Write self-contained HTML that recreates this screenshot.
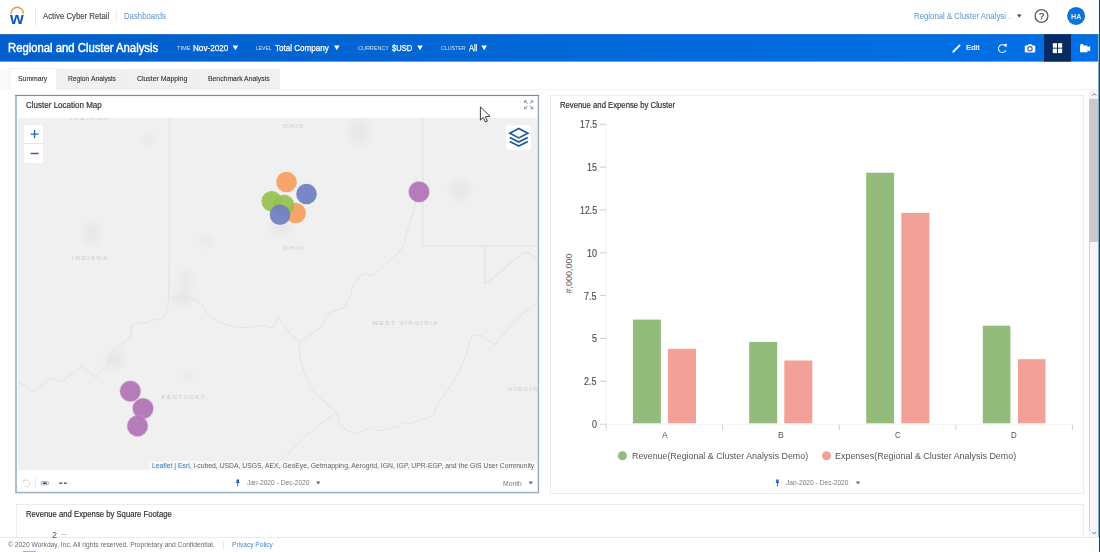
<!DOCTYPE html>
<html lang="en"><head><meta charset="utf-8"><title>Regional and Cluster Analysis</title>
<style>
html,body{margin:0;padding:0;background:#fff;}
body{width:1100px;height:552px;overflow:hidden;font-family:"Liberation Sans",sans-serif;}
#root{position:relative;width:1100px;height:552px;overflow:hidden;background:#fff;font-family:"Liberation Sans",sans-serif;}
#root div,#root span,#root svg{position:absolute;box-sizing:border-box;}
.t{white-space:nowrap;display:block;}
.tab{background:#f0f0f0;border:1px solid #eeeeee;top:68.6px;height:20.6px;}
.card{background:#fff;border:1px solid #ececec;}
.ml{color:#cacaca;font-size:6.2px;line-height:7px;white-space:nowrap;}

</style></head>
<body>
<div id="root">
<!-- ===== top header ===== -->
<svg style="left:0;top:0" width="60" height="34" viewBox="0 0 60 34">
  <path d="M11.15 13.3 A6.05 6.05 0 0 1 23.25 13.3" fill="none" stroke="#e6a044" stroke-width="1.45" stroke-linecap="round"/>
  <rect x="35" y="7" width="1" height="18.5" fill="#e8e8e8"/>
</svg>
<span class="t" style="left:10.1px;top:11.1px;font-size:17px;line-height:18px;font-weight:700;color:#0a58b8;transform:scale(1.04,0.94);transform-origin:0 0;">w</span>
<div style="left:116px;top:11px;width:1px;height:11px;background:#ececec"></div>
<svg style="left:1010px;top:0" width="90" height="34" viewBox="1010 0 90 34">
  <path d="M1017 14.5 h4.6 l-2.3 3 z" fill="#2c416b"/>
  <circle cx="1041.5" cy="16" r="6.4" fill="#fff" stroke="#5c5c5c" stroke-width="1.35"/>
  <circle cx="1076.1" cy="15.9" r="9" fill="#0b72de"/>
</svg>
<span class="t" style="left:1038.95px;top:11.3px;font-size:9.4px;line-height:10px;font-weight:400;color:#484848;-webkit-text-stroke:0.25px #484848;">?</span>

<!-- ===== blue title bar ===== -->
<svg style="left:0;top:33px" width="1100" height="30" viewBox="0 33 1100 30"><defs><linearGradient id="bg" x1="0" y1="0" x2="1" y2="0"><stop offset="0" stop-color="#005fca"/><stop offset="1" stop-color="#0070e6"/></linearGradient></defs><rect x="0" y="34.3" width="1098.6" height="27.3" fill="url(#bg)"/><rect x="0" y="34.3" width="1098.6" height="0.8" fill="#0a58b4" fill-opacity="0.7"/><rect x="1044" y="34.3" width="27" height="27.3" fill="#062a62"/></svg>
<svg style="left:0;top:34px" width="1100" height="28" viewBox="0 34 1100 28">
  <g fill="#fff">
    <path d="M232.6 45.6 h5.6 l-2.8 4.6 z"/>
    <path d="M334 45.6 h5.6 l-2.8 4.6 z"/>
    <path d="M417.2 45.6 h5.6 l-2.8 4.6 z"/>
    <path d="M481.4 45.6 h5.6 l-2.8 4.6 z"/>
    <!-- pencil -->
    <path d="M952.2 52.8 l0.6 -2 l6.6 -6.6 l1.4 1.4 l-6.6 6.6 z"/>
    <!-- camera -->
    <path d="M1025.6 45.5 h2 l0.9 -1.3 h3 l0.9 1.3 h2 a0.8 0.8 0 0 1 0.8 0.8 v5.4 a0.8 0.8 0 0 1 -0.8 0.8 h-8.8 a0.8 0.8 0 0 1 -0.8 -0.8 v-5.4 a0.8 0.8 0 0 1 0.8 -0.8 z"/>
    <!-- grid -->
    <rect x="1052.8" y="43.2" width="4.2" height="4.5"/><rect x="1058" y="43.2" width="4.2" height="4.5"/>
    <rect x="1052.8" y="48.6" width="4.2" height="4.5"/><rect x="1058" y="48.6" width="4.2" height="4.5"/>
    <!-- video camera -->
    <path d="M1080 45.4 h0.5 v-1.3 h2.7 v1.3 h4.3 v1.9 l2.7 -1.3 v5.6 l-2.7 -1.3 v2 h-7.5 z"/>
  </g>
  <circle cx="1030" cy="48.7" r="2.7" fill="#3d62a8"/>
  <circle cx="1030" cy="48.7" r="1.5" fill="#fff"/>
  <!-- refresh -->
  <path d="M1005.4 46.2 A3.9 3.9 0 1 0 1005.9 50.2" fill="none" stroke="#eaf4ff" stroke-width="1.05"/>
  <path d="M1003.4 44.2 l3.6 -0.4 l-0.6 3.6 z" fill="#eaf4ff"/>
</svg>

<!-- ===== tabs ===== -->
<div style="left:0;top:89px;width:1089px;height:1px;background:#f3f2f1"></div>
<div style="left:0;top:68.6px;width:8.5px;height:21px;background:#fafafa"></div>
<div class="tab" style="left:57px;width:69px;"></div>
<div class="tab" style="left:126px;width:72.5px;"></div>
<div class="tab" style="left:198.5px;width:81.5px;"></div>
<div style="left:8.5px;top:68.3px;width:48.5px;height:22px;background:#fff;border:1px solid #f1f1f1;border-bottom:none"></div>

<!-- ===== card 1 : map ===== -->
<svg style="left:14px;top:93px" width="527" height="402" viewBox="14 93 527 402">
  <rect x="16" y="95.45" width="522.4" height="397.1" rx="1.5" fill="#fff" stroke="none"/>
  <rect x="15.1" y="95" width="1.8" height="398" fill="#a7b8c8"/>
  <rect x="537.7" y="95" width="1.4" height="398" fill="#93a8bb"/>
  <rect x="15.1" y="491.8" width="524" height="1.6" fill="#a3b4c4"/>
  <rect x="15.1" y="94.85" width="524" height="1.2" fill="#7f8d94"/>
</svg>
<div id="map" style="left:18px;top:118px;width:519px;height:352px;background:#f0f0f0;overflow:hidden;">
  <svg style="left:0;top:0" width="520" height="352" viewBox="18 118 520 352">
    <defs><filter id="bl" x="-50%" y="-50%" width="200%" height="200%"><feGaussianBlur stdDeviation="3.5"/></filter></defs>
    <g fill="#e8e8e8" stroke="none" filter="url(#bl)">
      <ellipse cx="91.5" cy="234" rx="8" ry="12"/><ellipse cx="149" cy="139" rx="6" ry="5"/>
      <ellipse cx="206" cy="241" rx="6" ry="6"/><ellipse cx="186" cy="279" rx="7" ry="10"/>
      <ellipse cx="281" cy="228" rx="11" ry="8"/><ellipse cx="359" cy="132" rx="11" ry="13"/>
      <ellipse cx="460" cy="190" rx="11" ry="11"/><ellipse cx="182" cy="298" rx="10" ry="8"/>
      <ellipse cx="115" cy="360" rx="10" ry="9"/><ellipse cx="188" cy="376" rx="5" ry="5"/>
    </g>
    <g fill="none" stroke="#dadcde" stroke-width="0.8">
      <path d="M169 118 V291"/>
      <path d="M423 118 V245.8 H538"/>
      <path d="M484.7 246 V284 L491 279.5 L498 274 L509 264 L520.4 255 L525 252.5 L530 253.6 L534 257 L538 260"/>
    </g>
    <g fill="none" stroke="#e1e1e1" stroke-width="0.9" stroke-linejoin="round">
      <path d="M168.8 291 L168 303.6 L166 312 L163 318 L154 320 L145.6 322.7 L138 323 L131.2 326 L131.5 333 L129.6 338.7 L125 341 L121.7 345 L116 348 L112 353 L109 361 L105.7 367.4 L100 372 L96 378.5 L91 373 L86.6 370.5 L83 367 L80.2 365.8 L76 371 L72.2 373.7 L66 378 L61 381.7 L55 379 L50 378.5 L45 383 L40.3 386.5 L36 390 L32.4 391.3 L28 387 L24.4 385 L18 383"/>
      <path d="M168.8 299 L171 298.8 L177 296 L184 295.6 L193 299 L201.4 303.6 L205 310 L209.4 316.3 L217 321 L225.3 324.3 L236 327 L247.7 327.5 L257 326 L266.8 326 L273 328 L278 318 L283 324 L287.6 330.7 L294 337 L300.3 341.8"/>
      <path d="M416 177 L417.5 184 L416 200 L413.6 210.5 L411 219 L408.8 226.5 L406 236 L404 245.6 L400 251 L396 255 L389 261 L383.3 266.3 L377 272 L370.5 276 L366 273.5 L362.5 274.3 L358 279 L354.6 282.3 L352 288 L351.4 294 L348 300 L345 306.8 L337 310 L329 313 L325 320 L322.7 326 L311 334 L300.3 341.8 L299 350 L300.3 357.8 L304 372 L310 386.5 L317 395 L325.8 402.5 L331 408 L337 412.7 L339 420 L341.8 426.4 L348 431 L356 434.3 L364 430 L372 426.4 L376 430 L380 431 L390 428 L399 426.4 L404 421.6 L408 423.5 L412 423 L423 419.5 L434.3 415 L435 409 L437.5 404 L447 391 L456.6 377 L462 365 L466.2 354.6 L469 344 L472.6 334 L477 336 L482 335.5 L489 341 L495 345 L501 337 L507.7 329 L515 321 L523.6 313 L531 308 L538 302"/>
      <path d="M337 412.7 L325.8 420 L314 429 L303.5 437.5 L295 446 L287.6 453.5 L282 459 L278 463 L272 470"/>
      <path d="M27.6 194.6 L45 180 L69 167.4 L96 159 L123 156 L142 161 L158 172" stroke="#f4f4f4" stroke-width="1"/>
    </g>
  </svg>
  <!-- map labels -->
  <span class="ml" style="left:52.4px;top:-4.0px;letter-spacing:2.0px;">INDIANA</span>
  <span class="ml" style="left:264.8px;top:3.8px;letter-spacing:1.6px;">OHIO</span>
  <span class="ml" style="left:264.8px;top:125.8px;letter-spacing:1.6px;">OHIO</span>
  <span class="ml" style="left:54.1px;top:136.3px;letter-spacing:1.6px;">INDIANA</span>
  <span class="ml" style="left:143.4px;top:274.6px;letter-spacing:1.4px;">KENTUCKY</span>
  <span class="ml" style="left:354.2px;top:201.2px;letter-spacing:1.55px;">WEST VIRGINIA</span>
  <span class="ml" style="left:490.3px;top:266.9px;letter-spacing:1.55px;">VIRGINIA</span>
  <!-- markers -->
  <svg style="left:0;top:0" width="520" height="352" viewBox="18 118 520 352">
    <g fill-opacity="0.92">
      <circle cx="286.5" cy="182" r="10.3" fill="#f5a05c"/>
      <circle cx="306.5" cy="194" r="10.3" fill="#6e7fc2"/>
      <circle cx="295.6" cy="213" r="10.3" fill="#f5a05c"/>
      <circle cx="271.7" cy="201.3" r="10.3" fill="#97c04f"/>
      <circle cx="284" cy="205" r="10.3" fill="#97c04f"/>
      <circle cx="280" cy="214.8" r="10.3" fill="#6e7fc2"/>
      <circle cx="419" cy="191.8" r="10.4" fill="#b072b5" stroke="#d9a8dc" stroke-opacity="0.35" stroke-width="1.2"/>
      <circle cx="130.3" cy="391.2" r="10.4" fill="#b072b5" stroke="#d9a8dc" stroke-opacity="0.35" stroke-width="1.2"/>
      <circle cx="143" cy="408.6" r="10.4" fill="#b072b5" stroke="#d9a8dc" stroke-opacity="0.35" stroke-width="1.2"/>
      <circle cx="137.5" cy="426" r="10.4" fill="#b072b5" stroke="#d9a8dc" stroke-opacity="0.35" stroke-width="1.2"/>
    </g>
  </svg>
  <!-- zoom control -->
  <div style="left:5.9px;top:6.6px;width:19.3px;height:38.4px;background:#fff;border-radius:1.5px;"></div>
  <div style="left:5.9px;top:25.2px;width:19.3px;height:1px;background:#e4e4e4;"></div>
  <svg style="left:6px;top:7px" width="20" height="38" viewBox="24 125 20 38">
    <path d="M30.5 134.1 h8.2 M34.6 130 v8.2 M30.6 153.5 h8" stroke="#2d66a8" stroke-width="1.35" fill="none"/>
  </svg>
  <!-- layers control -->
  <div style="left:487.8px;top:6.5px;width:25.2px;height:25.4px;background:#fff;border-radius:3px;"></div>
  <svg style="left:487.6px;top:6.4px" width="25.4" height="25.4" viewBox="505.6 124.4 25.4 25.4">
    <g fill="none" stroke="#1f5b96" stroke-width="1.9" stroke-linejoin="miter">
      <path d="M509.4 141.9 L518.4 146.4 L527.4 141.9"/>
      <path d="M509.4 137.9 L518.4 142.4 L527.4 137.9"/>
      <path d="M518.4 128.9 L527.4 133.6 L518.4 138.3 L509.4 133.6 Z" fill="#fff" stroke-width="1.7"/>
    </g>
  </svg>
  <!-- attribution -->
  <div style="left:131px;top:343px;width:389px;height:9.2px;background:rgba(250,252,255,0.62);"></div>
</div>
<!-- fullscreen icon -->
<svg style="left:524px;top:100px" width="10" height="10" viewBox="524 100 10 10">
  <g stroke="#7d8a96" stroke-width="0.9" fill="none">
    <path d="M524.6 103 V100.8 H526.8 M530.6 100.8 H532.8 V103 M532.8 106.6 V108.8 H530.6 M526.8 108.8 H524.6 V106.6"/>
    <path d="M524.8 101 L527.6 103.8 M532.6 101 L529.8 103.8 M532.6 108.6 L529.8 105.8 M524.8 108.6 L527.6 105.8"/>
  </g>
</svg>
<!-- mouse cursor -->
<svg style="left:478px;top:104px" width="16" height="20" viewBox="478 104 16 20">
  <path d="M480.4 106.9 V120 L483.3 117.5 L485.3 122 L487.4 121.1 L485.4 116.7 L490 116.3 Z" fill="#fff" stroke="#2a2a2a" stroke-width="0.9" stroke-linejoin="round"/>
</svg>
<!-- card1 footer icons -->
<svg style="left:18px;top:474px" width="520" height="18" viewBox="18 474 520 18">
  <path d="M23.4 481.6 A3.4 3.4 0 1 1 24.6 486.2" fill="none" stroke="#d6d6d6" stroke-width="0.9"/>
  <path d="M22.2 480 l1.2 2.4 l2 -1.6 z" fill="#d6d6d6"/>
  <rect x="35" y="477.8" width="0.8" height="10.4" fill="#e6e6e6"/>
  <rect x="41" y="481.5" width="7.6" height="3.4" rx="1.7" fill="none" stroke="#7da7d6" stroke-width="0.8"/>
  <rect x="42.8" y="482.5" width="4" height="1.5" fill="#3c3c3c"/>
  <rect x="59.2" y="482.4" width="3" height="1.6" fill="#6a6a6a"/>
  <rect x="63.8" y="482.4" width="3" height="1.6" fill="#6a6a6a"/>
  <!-- pin -->
  <path d="M236.6 479.4 h2.4 v2.6 l0.9 1.1 h-1.7 v2.8 l-0.4 0.8 l-0.4 -0.8 v-2.8 h-1.7 l0.9 -1.1 z" fill="#2456c6"/>
  <path d="M316 481.6 h4.4 l-2.2 2.8 z" fill="#6b6b6b"/>
  <path d="M528.6 481.6 h4.4 l-2.2 2.8 z" fill="#6b6b6b"/>
</svg>

<!-- ===== card 2 : bar chart ===== -->
<div class="card" style="left:550px;top:95px;width:534px;height:398.8px;"></div>
<svg style="left:551px;top:96px" width="532" height="396" viewBox="551 96 532 396">
  <g stroke="#c6c6c6" stroke-width="0.9" fill="none">
    <path d="M600 124.3 H606.4 M600 167.1 H606.4 M600 209.9 H606.4 M600 252.8 H606.4 M600 295.6 H606.4 M600 338.4 H606.4 M600 381.3 H606.4 M600 424.2 H606.4"/>
    <path d="M606.2 424.5 V430 M722.6 424.5 V430 M839.2 424.5 V430 M955.8 424.5 V430 M1072.4 424.5 V430"/>
  </g>
  <path d="M606.2 124 V424.3 H1072.4" stroke="#f0f0f0" stroke-width="0.8" fill="none"/>
  <g fill="#93bc7c">
    <rect x="632.9" y="319.6" width="28" height="103.7"/>
    <rect x="749.2" y="342" width="28" height="81.3"/>
    <rect x="866.2" y="172.7" width="27.9" height="250.6"/>
    <rect x="982.8" y="325.7" width="27.6" height="97.6"/>
    <circle cx="622.4" cy="455.8" r="4.5"/>
  </g>
  <g fill="#f3a198">
    <rect x="668" y="348.8" width="28" height="74.5"/>
    <rect x="784.3" y="360.5" width="28" height="62.8"/>
    <rect x="901.4" y="212.9" width="28" height="210.4"/>
    <rect x="1017.9" y="359.2" width="27.6" height="64.1"/>
    <circle cx="826.5" cy="455.8" r="4.5"/>
  </g>
  <path d="M776.2 479.4 h2.4 v2.6 l0.9 1.1 h-1.7 v2.8 l-0.4 0.8 l-0.4 -0.8 v-2.8 h-1.7 l0.9 -1.1 z" fill="#2456c6"/>
  <path d="M855.8 481.6 h4.4 l-2.2 2.8 z" fill="#6b6b6b"/>
</svg>
<span class="t" style="left:544.1px;top:269px;width:50px;text-align:center;font-size:9.1px;line-height:9px;color:#666;transform:rotate(-90deg) scaleX(0.985);transform-origin:50% 50%;">#,000,000</span>

<!-- ===== card 3 (cut off) ===== -->
<div class="card" style="left:15.5px;top:504px;width:1068.5px;height:60px;"></div>
<div style="left:60.5px;top:533.6px;width:6.3px;height:0.9px;background:#cfcfcf"></div>

<!-- ===== right scrollbar ===== -->
<div style="left:1089px;top:89px;width:9.6px;height:448px;background:#f6f6f6;"></div>
<div style="left:1089px;top:99px;width:9.4px;height:143px;background:#c9c9c9;"></div>
<div style="left:1089px;top:242px;width:0.9px;height:290px;background:#cfd3d6;"></div>
<svg style="left:1089px;top:89px" width="10" height="449" viewBox="1089 89 10 449">
  <path d="M1092.4 95.6 l1.9 -2 l1.9 2 M1092.4 532 l1.9 2 l1.9 -2" fill="none" stroke="#747474" stroke-width="1"/>
</svg>
<div style="left:1097.8px;top:34px;width:0.8px;height:518px;background:#7fb0cc;"></div>
<div style="left:1098.5px;top:0;width:1.5px;height:552px;background:#124a5c;"></div>

<!-- ===== footer ===== -->
<div style="left:0;top:536.8px;width:1098.6px;height:15.2px;background:#fff;border-top:1px solid #e9e9e9;"></div>
<div style="left:223px;top:540.5px;width:0.8px;height:8px;background:#e4e4e4"></div>
<div style="left:23.4px;top:550.8px;width:12.2px;height:1.2px;background:#b4b0c2"></div>

<!-- text labels -->
<span class="t" id="t0" style="left:43.00px;top:12.15px;font-size:8.40px;line-height:8.40px;font-weight:400;color:#4a4a4a;transform:scaleX(0.9309);transform-origin:0 50%;-webkit-text-stroke:0.15px #4a4a4a;">Active Cyber Retail</span>
<span class="t" id="t1" style="left:124.00px;top:12.15px;font-size:8.40px;line-height:8.40px;font-weight:400;color:#5a93cf;transform:scaleX(0.9298);transform-origin:0 50%;">Dashboards</span>
<span class="t" id="t2" style="left:914.20px;top:12.25px;font-size:8.40px;line-height:8.40px;font-weight:400;color:#5a93cf;transform:scaleX(0.9321);transform-origin:0 50%;">Regional &amp; Cluster Analysi</span>
<span class="t" id="t3" style="left:1007.60px;top:12.25px;font-size:8.40px;line-height:8.40px;font-weight:400;color:#c2cad3;transform:scaleX(0.7302);transform-origin:0 50%;">..</span>
<span class="t" id="t4" style="left:1070.90px;top:12.73px;font-size:7.00px;line-height:7.00px;font-weight:700;color:#eaf3fd;transform:scaleX(1.0173);transform-origin:0 50%;">HA</span>
<span class="t" id="t5" style="left:8.30px;top:42.07px;font-size:12.10px;line-height:12.10px;font-weight:400;color:#fff;transform:scaleX(0.9342);transform-origin:0 50%;-webkit-text-stroke:0.45px #fff;">Regional and Cluster Analysis</span>
<span class="t" id="t6" style="left:177.00px;top:45.80px;font-size:5.80px;line-height:5.80px;font-weight:400;color:#cfe2f8;transform:scaleX(0.9741);transform-origin:0 50%;">TIME</span>
<span class="t" id="t7" style="left:193.40px;top:44.25px;font-size:8.60px;line-height:8.60px;font-weight:400;color:#fff;transform:scaleX(0.9446);transform-origin:0 50%;-webkit-text-stroke:0.25px #fff;">Nov-2020</span>
<span class="t" id="t8" style="left:256.40px;top:45.80px;font-size:5.80px;line-height:5.80px;font-weight:400;color:#cfe2f8;transform:scaleX(0.8637);transform-origin:0 50%;">LEVEL</span>
<span class="t" id="t9" style="left:275.30px;top:44.25px;font-size:8.60px;line-height:8.60px;font-weight:400;color:#fff;transform:scaleX(0.9367);transform-origin:0 50%;-webkit-text-stroke:0.25px #fff;">Total Company</span>
<span class="t" id="t10" style="left:358.00px;top:45.80px;font-size:5.80px;line-height:5.80px;font-weight:400;color:#cfe2f8;transform:scaleX(0.9434);transform-origin:0 50%;">CURRENCY</span>
<span class="t" id="t11" style="left:391.80px;top:44.25px;font-size:8.60px;line-height:8.60px;font-weight:400;color:#fff;transform:scaleX(0.8807);transform-origin:0 50%;-webkit-text-stroke:0.25px #fff;">$USD</span>
<span class="t" id="t12" style="left:441.30px;top:45.80px;font-size:5.80px;line-height:5.80px;font-weight:400;color:#cfe2f8;transform:scaleX(0.9127);transform-origin:0 50%;">CLUSTER</span>
<span class="t" id="t13" style="left:468.50px;top:44.25px;font-size:8.60px;line-height:8.60px;font-weight:400;color:#fff;transform:scaleX(0.8680);transform-origin:0 50%;-webkit-text-stroke:0.25px #fff;">All</span>
<span class="t" id="t14" style="left:966.00px;top:44.25px;font-size:8.10px;line-height:8.10px;font-weight:400;color:#f4faff;transform:scaleX(0.9747);transform-origin:0 50%;-webkit-text-stroke:0.22px #f4faff;">Edit</span>
<span class="t" id="t15" style="left:17.70px;top:75.43px;font-size:7.40px;line-height:7.40px;font-weight:400;color:#333;transform:scaleX(0.9265);transform-origin:0 50%;-webkit-text-stroke:0.12px #333;">Summary</span>
<span class="t" id="t16" style="left:68.00px;top:75.43px;font-size:7.40px;line-height:7.40px;font-weight:400;color:#333;transform:scaleX(0.9127);transform-origin:0 50%;-webkit-text-stroke:0.12px #333;">Region Analysis</span>
<span class="t" id="t17" style="left:137.00px;top:75.43px;font-size:7.40px;line-height:7.40px;font-weight:400;color:#333;transform:scaleX(0.9345);transform-origin:0 50%;-webkit-text-stroke:0.12px #333;">Cluster Mapping</span>
<span class="t" id="t18" style="left:207.80px;top:75.43px;font-size:7.40px;line-height:7.40px;font-weight:400;color:#333;transform:scaleX(0.9257);transform-origin:0 50%;-webkit-text-stroke:0.12px #333;">Benchmark Analysis</span>
<span class="t" id="t19" style="left:26.00px;top:100.90px;font-size:8.30px;line-height:8.30px;font-weight:400;color:#2e2e2e;transform:scaleX(0.9668);transform-origin:0 50%;-webkit-text-stroke:0.18px #2e2e2e;">Cluster Location Map</span>
<span class="t" id="t20" style="left:560.00px;top:100.90px;font-size:8.30px;line-height:8.30px;font-weight:400;color:#2e2e2e;transform:scaleX(0.9304);transform-origin:0 50%;-webkit-text-stroke:0.18px #2e2e2e;">Revenue and Expense by Cluster</span>
<span class="t" id="t21" style="left:26.00px;top:510.30px;font-size:8.30px;line-height:8.30px;font-weight:400;color:#2e2e2e;transform:scaleX(0.9296);transform-origin:0 50%;-webkit-text-stroke:0.18px #2e2e2e;">Revenue and Expense by Square Footage</span>
<span class="t" id="t22" style="left:8.20px;top:541.13px;font-size:7.00px;line-height:7.00px;font-weight:400;color:#6a6a6a;transform:scaleX(0.9527);transform-origin:0 50%;">© 2020 Workday, Inc. All rights reserved. Proprietary and Confidential.</span>
<span class="t" id="t23" style="left:231.80px;top:541.13px;font-size:7.00px;line-height:7.00px;font-weight:400;color:#4a86c8;transform:scaleX(0.9385);transform-origin:0 50%;">Privacy Policy</span>
<span class="t" id="t24" style="left:579.50px;top:120.23px;font-size:10.10px;line-height:10.10px;font-weight:400;color:#4f4f4f;transform:scaleX(0.8700);transform-origin:0 50%;-webkit-text-stroke:0.15px #4f4f4f;">17.5</span>
<span class="t" id="t25" style="left:586.60px;top:163.03px;font-size:10.10px;line-height:10.10px;font-weight:400;color:#4f4f4f;transform:scaleX(0.8901);transform-origin:0 50%;-webkit-text-stroke:0.15px #4f4f4f;">15</span>
<span class="t" id="t26" style="left:579.50px;top:205.83px;font-size:10.10px;line-height:10.10px;font-weight:400;color:#4f4f4f;transform:scaleX(0.8700);transform-origin:0 50%;-webkit-text-stroke:0.15px #4f4f4f;">12.5</span>
<span class="t" id="t27" style="left:586.60px;top:248.73px;font-size:10.10px;line-height:10.10px;font-weight:400;color:#4f4f4f;transform:scaleX(0.8901);transform-origin:0 50%;-webkit-text-stroke:0.15px #4f4f4f;">10</span>
<span class="t" id="t28" style="left:584.20px;top:291.53px;font-size:10.10px;line-height:10.10px;font-weight:400;color:#4f4f4f;transform:scaleX(0.8828);transform-origin:0 50%;-webkit-text-stroke:0.15px #4f4f4f;">7.5</span>
<span class="t" id="t29" style="left:591.60px;top:334.33px;font-size:10.10px;line-height:10.10px;font-weight:400;color:#4f4f4f;transform:scaleX(0.8889);transform-origin:0 50%;-webkit-text-stroke:0.15px #4f4f4f;">5</span>
<span class="t" id="t30" style="left:584.20px;top:377.23px;font-size:10.10px;line-height:10.10px;font-weight:400;color:#4f4f4f;transform:scaleX(0.8828);transform-origin:0 50%;-webkit-text-stroke:0.15px #4f4f4f;">2.5</span>
<span class="t" id="t31" style="left:591.60px;top:420.13px;font-size:10.10px;line-height:10.10px;font-weight:400;color:#4f4f4f;transform:scaleX(0.8889);transform-origin:0 50%;-webkit-text-stroke:0.15px #4f4f4f;">0</span>
<span class="t" id="t32" style="left:661.60px;top:429.87px;font-size:9.40px;line-height:9.40px;font-weight:400;color:#555;transform:scaleX(0.9097);transform-origin:0 50%;">A</span>
<span class="t" id="t33" style="left:778.20px;top:429.87px;font-size:9.40px;line-height:9.40px;font-weight:400;color:#555;transform:scaleX(0.9097);transform-origin:0 50%;">B</span>
<span class="t" id="t34" style="left:894.80px;top:429.87px;font-size:9.40px;line-height:9.40px;font-weight:400;color:#555;transform:scaleX(0.8406);transform-origin:0 50%;">C</span>
<span class="t" id="t35" style="left:1011.20px;top:429.87px;font-size:9.40px;line-height:9.40px;font-weight:400;color:#555;transform:scaleX(0.8406);transform-origin:0 50%;">D</span>
<span class="t" id="t36" style="left:631.60px;top:451.03px;font-size:9.90px;line-height:9.90px;font-weight:400;color:#555;transform:scaleX(0.8962);transform-origin:0 50%;">Revenue(Regional &amp; Cluster Analysis Demo)</span>
<span class="t" id="t37" style="left:834.80px;top:451.03px;font-size:9.90px;line-height:9.90px;font-weight:400;color:#555;transform:scaleX(0.9044);transform-origin:0 50%;">Expenses(Regional &amp; Cluster Analysis Demo)</span>
<span class="t" id="t38" style="left:246.50px;top:480.18px;font-size:7.10px;line-height:7.10px;font-weight:400;color:#7a7a7a;transform:scaleX(0.9376);transform-origin:0 50%;">Jan-2020 - Dec-2020</span>
<span class="t" id="t39" style="left:786.30px;top:480.18px;font-size:7.10px;line-height:7.10px;font-weight:400;color:#7a7a7a;transform:scaleX(0.9376);transform-origin:0 50%;">Jan-2020 - Dec-2020</span>
<span class="t" id="t40" style="left:503.00px;top:480.03px;font-size:7.20px;line-height:7.20px;font-weight:400;color:#7a7a7a;transform:scaleX(0.9407);transform-origin:0 50%;">Month</span>
<span class="t" id="t41" style="left:52.40px;top:529.78px;font-size:9.80px;line-height:9.80px;font-weight:400;color:#555;transform:scaleX(0.9169);transform-origin:0 50%;">2</span>
<span class="t" id="t42" style="left:151.60px;top:462.57px;font-size:6.90px;line-height:6.90px;font-weight:400;color:#626262;transform:scaleX(0.9880);transform-origin:0 50%;"><span style="position:static;color:#2f79c0">Leaflet</span> | <span style="position:static;color:#2f79c0">Esri</span>, i-cubed, USDA, USGS, AEX, GeoEye, Getmapping, Aerogrid, IGN, IGP, UPR-EGP, and the GIS User Community</span>
</div>
</body></html>
